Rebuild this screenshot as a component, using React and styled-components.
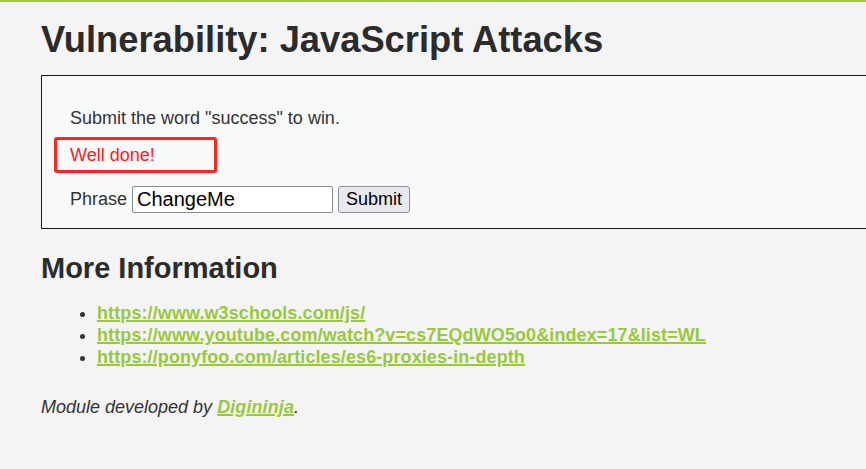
import styled, { createGlobalStyle } from "styled-components";

const Global = createGlobalStyle`
    html, body {
        margin: 0;
        padding: 0;
        background: #f4f4f4;
    }
    body {
        font-family: "Liberation Sans", Arial, sans-serif;
        color: #333;
    }
`;

const Page = styled.div`
    border-top: 2px solid #a3c83b;
    padding: 0 0 40px 41px;
    min-height: 467px;
    box-sizing: border-box;
`;

const Title = styled.h1`
    margin: 0;
    padding-top: 18px;
    font-size: 36.3px;
    line-height: 40px;
    font-weight: bold;
    color: #2b2b2b;
`;

const Panel = styled.div`
    margin-top: 15px;
    margin-right: -20px;
    border: 1px solid #1a1a1a;
    background: #f8f9f9;
    padding: 32px 28px 15px;
    font-size: 18px;
`;

const Line = styled.p`
    margin: 0 0 9px;
    line-height: 20px;
`;

const Flash = styled.div`
    margin: 0 0 13px -16px;
    width: 163px;
    box-sizing: border-box;
    padding: 5px 13px;
    border: 3px solid #ff2323;
    border-radius: 3px;
    color: #ff1a1a;
    line-height: 20px;
`;

const Form = styled.form`
    display: flex;
    align-items: center;
    gap: 5px;
`;

const Input = styled.input`
    width: 201px;
    height: 27px;
    box-sizing: border-box;
    border: 1px solid #8a8a96;
    border-radius: 2px;
    padding: 0 4px;
    font-family: inherit;
    font-size: 20px;
    color: #000;
    background: #fff;
`;

const Button = styled.button`
    height: 27px;
    box-sizing: border-box;
    padding: 0 7px;
    border: 1px solid #8f8f9d;
    border-radius: 3px;
    background: #e9e9ed;
    font-family: inherit;
    font-size: 18px;
    color: #000;
`;

const SubTitle = styled.h2`
    margin: 23px 0 0;
    font-size: 29px;
    line-height: 32px;
    color: #2b2b2b;
`;

const List = styled.ul`
    margin: 18px 0 0;
    padding-left: 56px;
    line-height: 22px;
    font-size: 18px;
`;

const Link = styled.a`
    color: #98c93c;
    font-weight: bold;
    text-decoration: underline;
    text-decoration-thickness: 2px;
    letter-spacing: 0.1px;
`;

const Footer = styled.p`
    margin: 29px 0 0;
    line-height: 20px;
    font-style: italic;
    font-size: 18px;
`;

const links = [
    "https://www.w3schools.com/js/",
    "https://www.youtube.com/watch?v=cs7EQdWO5o0&index=17&list=WL",
    "https://ponyfoo.com/articles/es6-proxies-in-depth",
];

export default function App() {
    return (
        <Page>
            <Global />
            <Title>Vulnerability: JavaScript Attacks</Title>
            <Panel>
                <Line>Submit the word "success" to win.</Line>
                <Flash>Well done!</Flash>
                <Form onSubmit={(e) => e.preventDefault()}>
                    <span>Phrase</span>
                    <Input defaultValue="ChangeMe" />
                    <Button type="submit">Submit</Button>
                </Form>
            </Panel>
            <SubTitle>More Information</SubTitle>
            <List>
                {links.map((l) => (
                    <li key={l}>
                        <Link href="#">{l}</Link>
                    </li>
                ))}
            </List>
            <Footer>
                Module developed by <Link href="#">Digininja</Link>.
            </Footer>
        </Page>
    );
}
